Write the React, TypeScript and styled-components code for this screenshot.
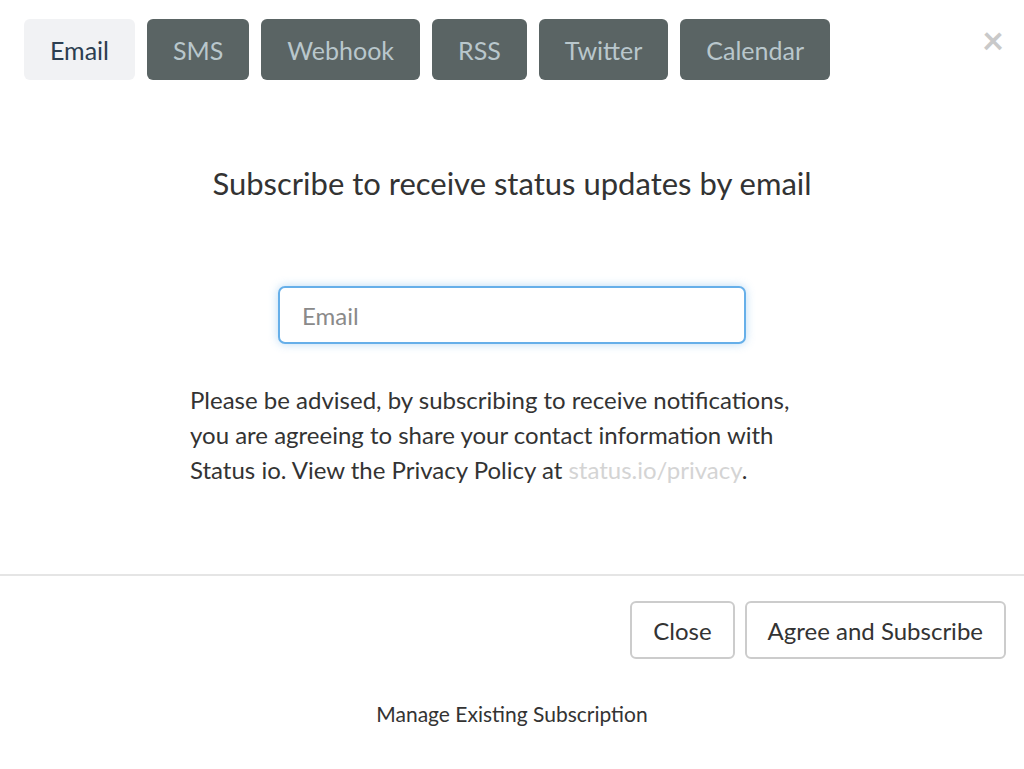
import React from "react";
import styled, { createGlobalStyle } from "styled-components";

const Global = createGlobalStyle`
  html, body { margin: 0; padding: 0; background: #fff; }
  body { font-family: Lato, "Open Sans", sans-serif; color: #333; }
  * { box-sizing: border-box; }
`;

const Page = styled.div`
  width: 1024px;
  height: 769px;
  display: flex;
  flex-direction: column;
  overflow: hidden;
`;

const TabBar = styled.div`
  display: flex;
  align-items: center;
  gap: 12px;
  padding: 19px 0 0 24px;
`;

const Tab = styled.button<{ $active?: boolean }>`
  height: 61px;
  padding: 0 26px;
  border: none;
  border-radius: 6px;
  font-family: Lato, sans-serif;
  font-size: 25px;
  background: ${(p) => (p.$active ? "#f1f2f4" : "#5a6464")};
  color: ${(p) => (p.$active ? "#2c3e50" : "#b9c7cc")};
`;

const CloseX = styled.span`
  margin-left: auto;
  margin-right: 20px;
  margin-top: -22px;
  font-size: 38px;
  font-weight: 700;
  color: #c9c9c9;
  line-height: 1;
`;

const Body = styled.div`
  display: flex;
  flex-direction: column;
  align-items: center;
  padding-top: 84px;
`;

const Heading = styled.h4`
  margin: 0;
  font-size: 31px;
  font-weight: 400;
  color: #333;
  line-height: 38px;
`;

const Input = styled.input`
  margin-top: 84px;
  width: 468px;
  height: 58px;
  border: 2px solid #66afe9;
  border-radius: 7px;
  padding: 0 22px;
  font-family: Lato, sans-serif;
  font-size: 24px;
  color: #555;
  outline: none;
  box-shadow: 0 0 10px rgba(102, 175, 233, 0.45);
  caret-color: #333;
  &::placeholder { color: #8a8a8a; }
`;

const Notice = styled.p`
  margin: 38px 0 0 0;
  width: 644px;
  padding-right: 30px;
  font-size: 24px;
  line-height: 35px;
  color: #333;
`;

const Link = styled.a`
  color: #d4d4d4;
  text-decoration: none;
`;

const Divider = styled.div`
  margin-top: 87px;
  height: 2px;
  background: #e5e5e5;
`;

const Footer = styled.div`
  display: flex;
  justify-content: flex-end;
  gap: 10px;
  padding: 25px 18px 0 0;
`;

const FooterButton = styled.button`
  height: 58px;
  padding: 0 21px;
  background: #fff;
  border: 2px solid #ccc;
  border-radius: 6px;
  font-family: Lato, sans-serif;
  font-size: 24px;
  color: #333;
`;

const Manage = styled.div`
  margin-top: 42px;
  text-align: center;
  font-size: 21px;
  color: #333;
`;

export default function App() {
  const tabs = ["Email", "SMS", "Webhook", "RSS", "Twitter", "Calendar"];
  return (
    <Page>
      <Global />
      <TabBar>
        {tabs.map((t, i) => (
          <Tab key={t} $active={i === 0}>
            {t}
          </Tab>
        ))}
        <CloseX>×</CloseX>
      </TabBar>
      <Body>
        <Heading>Subscribe to receive status updates by email</Heading>
        <Input placeholder="Email" autoFocus />
        <Notice>
          Please be advised, by subscribing to receive notifications, you are
          agreeing to share your contact information with Status io. View the
          Privacy Policy at <Link href="#">status.io/privacy</Link>.
        </Notice>
      </Body>
      <Divider />
      <Footer>
        <FooterButton>Close</FooterButton>
        <FooterButton>Agree and Subscribe</FooterButton>
      </Footer>
      <Manage>Manage Existing Subscription</Manage>
    </Page>
  );
}
